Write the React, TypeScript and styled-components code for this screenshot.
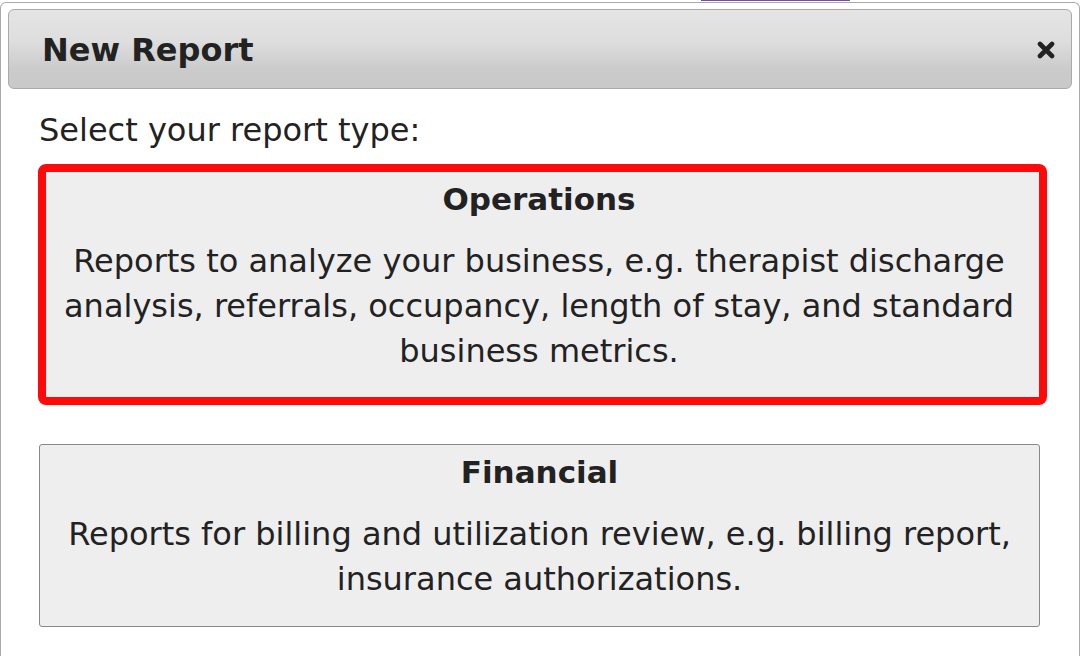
import styled, { createGlobalStyle } from "styled-components";

const GlobalStyle = createGlobalStyle`
  html, body {
    margin: 0;
    padding: 0;
    background: #ffffff;
  }
  body {
    font-family: "DejaVu Sans", Verdana, sans-serif;
    color: #222222;
  }
`;

interface ReportType {
  title: string;
  description: string;
  selected?: boolean;
}

const reportTypes: ReportType[] = [
  {
    title: "Operations",
    description:
      "Reports to analyze your business, e.g. therapist discharge analysis, referrals, occupancy, length of stay, and standard business metrics.",
    selected: true,
  },
  {
    title: "Financial",
    description:
      "Reports for billing and utilization review, e.g. billing report, insurance authorizations.",
  },
];

export default function App() {
  return (
    <>
      <GlobalStyle />
      <Page>
        <TopStrip>
          <TabHint />
        </TopStrip>
        <Dialog>
          <Header>
            <Title>New Report</Title>
            <CloseButton aria-label="Close">
              <svg width="18" height="18" viewBox="0 0 18 18">
                <path
                  d="M3 3 L15 15 M15 3 L3 15"
                  stroke="#222"
                  strokeWidth="4.6"
                  strokeLinecap="round"
                />
              </svg>
            </CloseButton>
          </Header>
          <Body>
            <Prompt>Select your report type:</Prompt>
            <Options>
              {reportTypes.map((type) => (
                <Option key={type.title} $selected={type.selected}>
                  <OptionTitle>{type.title}</OptionTitle>
                  <OptionText>{type.description}</OptionText>
                </Option>
              ))}
            </Options>
          </Body>
        </Dialog>
      </Page>
    </>
  );
}

const Page = styled.div`
  width: 1082px;
  height: 656px;
  overflow: hidden;
`;

const TopStrip = styled.div`
  height: 2px;
  position: relative;
`;

const TabHint = styled.div`
  position: absolute;
  left: 701px;
  top: 0;
  width: 149px;
  height: 1px;
  background: #7a4b9a;
`;

const Dialog = styled.div`
  width: 1080px;
  box-sizing: border-box;
  border: 1px solid #aaaaaa;
  border-bottom: none;
  border-radius: 6px 6px 0 0;
  padding: 6px 7px 0 7px;
  height: 660px;
  background: #ffffff;
`;

const Header = styled.div`
  box-sizing: border-box;
  height: 80px;
  border: 1px solid #aaaaaa;
  border-radius: 6px;
  background: linear-gradient(#e4e4e4 0%, #dedede 40%, #cbcbcb 75%, #c9c9c9 100%);
  display: flex;
  align-items: center;
  justify-content: space-between;
  padding: 2px 15px 0 33px;
`;

const Title = styled.h2`
  margin: 0;
  font-size: 32px;
  font-weight: 700;
  color: #222222;
`;

const CloseButton = styled.div`
  display: flex;
  align-items: center;
  justify-content: center;
  width: 20px;
  height: 20px;
`;

const Body = styled.div`
  padding: 19px 31px 0 31px;
`;

const Prompt = styled.p`
  margin: 0 0 11px 0;
  font-size: 32px;
  line-height: 45px;
`;

const Options = styled.div`
  display: flex;
  flex-direction: column;
  align-items: flex-start;
  gap: 39px;
`;

const Option = styled.div<{ $selected?: boolean }>`
  box-sizing: border-box;
  background: #eeeeee;
  text-align: center;
  border: ${(p) => (p.$selected ? "8px solid #ff0a0a" : "1px solid #888888")};
  border-radius: ${(p) => (p.$selected ? "8px" : "3px")};
  width: ${(p) => (p.$selected ? "1009px" : "1001px")};
  margin-left: ${(p) => (p.$selected ? "-1px" : "0")};
  padding: ${(p) => (p.$selected ? "5px 7px 23px 0" : "5px 0 24px 0")};
`;

const OptionTitle = styled.h3`
  margin: 0 0 17px 0;
  font-size: 31px;
  line-height: 45px;
  font-weight: 700;
`;

const OptionText = styled.p`
  margin: 0;
  font-size: 32px;
  line-height: 45px;
`;
